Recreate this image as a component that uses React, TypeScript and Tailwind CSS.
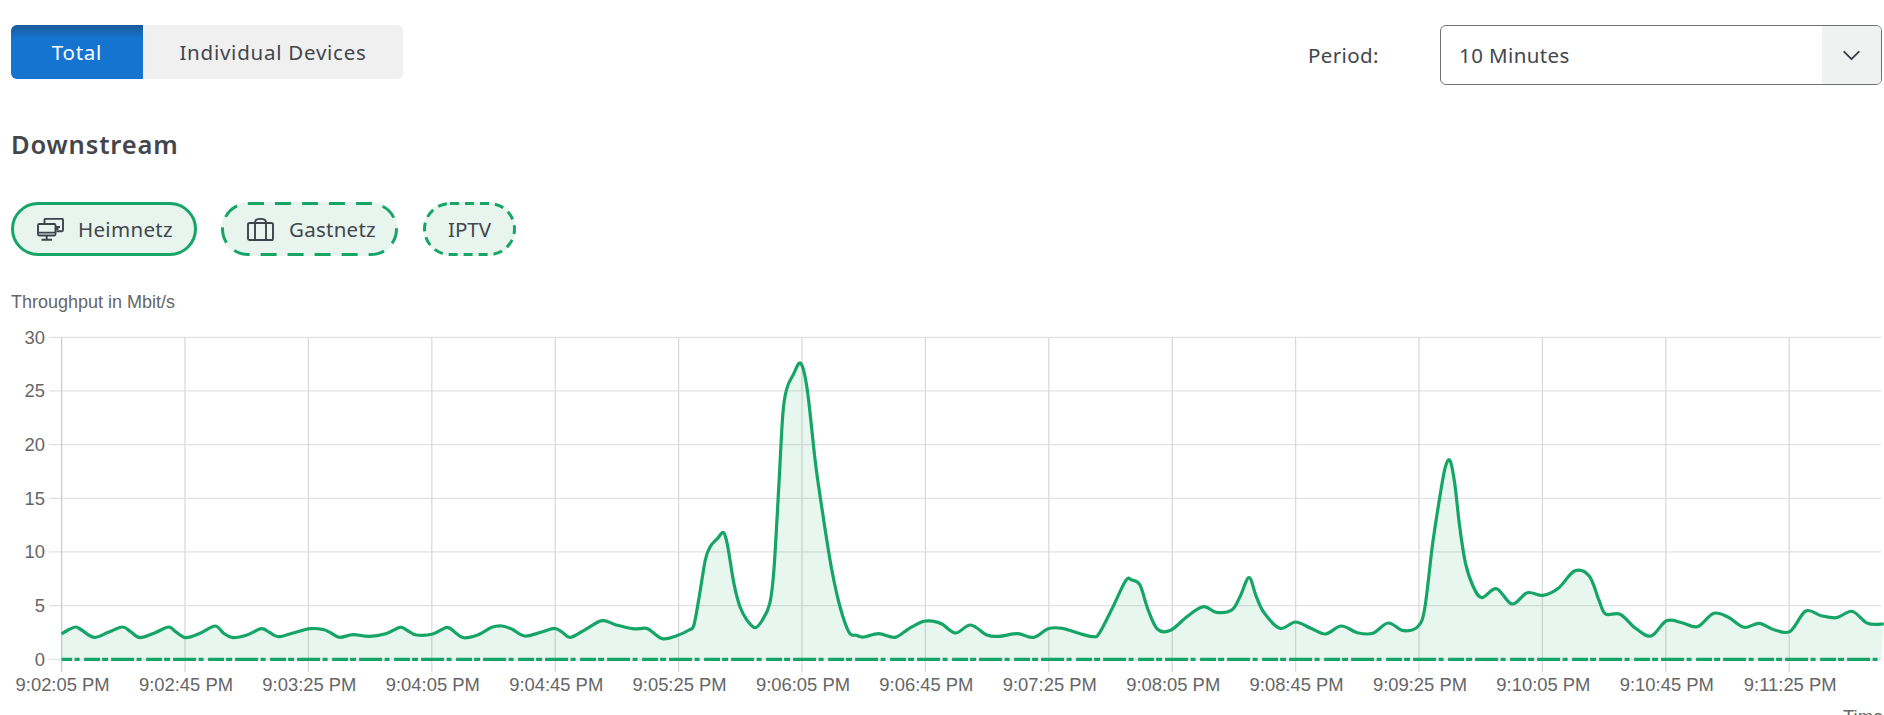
import { ChevronDown } from 'lucide-react';

const zoomA = [[151,942],[170,928],[186,921],[200,930],[230,952],[265,937],[300,921],[320,935],[343,953],[380,938],[413,921],[430,935],[455,953],[490,940],[527,918],[548,940],[570,953],[605,945],[640,926],[660,937],[682,950],[720,938],[760,926],[790,928],[810,938],[832,952],[865,944],[905,949],[945,941],[980,922],[1000,933],[1020,945],[1060,942],[1095,922],[1115,937],[1135,953],[1170,945],[1205,922],[1230,918],[1255,928],[1285,948],[1325,937],[1358,925],[1378,937],[1398,952],[1435,928],[1475,902],[1510,915],[1550,926]];
const zoomB = [[0,926],[20,927],[55,956],[90,947],[120,930],[132,915],[145,830],[160,720],[172,680],[190,655],[205,638],[215,680],[230,790],[245,860],[262,900],[282,923],[300,900],[318,850],[328,750],[340,500],[350,280],[360,205],[375,165],[394,130],[410,210],[430,430],[450,600],[470,750],[490,860],[512,937],[530,946],[548,951],[585,941],[625,952],[660,925],[695,904],[720,904],[740,912],[773,939],[810,915],[850,945],[880,949],[925,941],[965,952],[1000,926],[1035,925],[1075,940],[1110,950],[1125,940],[1155,870],[1190,782],[1205,780],[1225,795],[1245,870],[1268,928],[1300,931],[1340,890],[1380,860],[1412,877],[1450,870],[1470,830],[1492,773],[1510,830],[1530,880]];
const zoomC = [[0,925],[40,906],[80,925],[118,942],[158,918],[200,938],[240,940],[280,909],[320,932],[358,918],[375,860],[395,670],[415,520],[428,440],[440,422],[452,490],[465,620],[480,730],[500,800],[522,833],[560,806],[600,852],[640,818],[680,826],[720,805],[762,753],[800,768],[825,840],[842,882],[880,883],[920,925],[960,948],[1000,902],[1040,908],[1080,920],[1122,880],[1160,892],[1200,922],[1240,910],[1280,930],[1320,934],[1360,873],[1400,887],[1440,893],[1480,874],[1520,910],[1562,912]];

const pts: number[][] = [
  ...zoomA.map(([x, y]) => [x / 2.45, 320 + y / 3]),
  ...zoomB.map(([x, y]) => [640 + x / 2.45, 320 + y / 3]),
  ...zoomC.map(([x, y]) => [1280 + x / 2.587, 320 + y / 3]),
];

function smooth(p: number[][]) {
  let d = `M${p[0][0].toFixed(1)} ${p[0][1].toFixed(1)}`;
  for (let i = 0; i < p.length - 1; i++) {
    const a = p[Math.max(i - 1, 0)];
    const b = p[i];
    const c = p[i + 1];
    const e = p[Math.min(i + 2, p.length - 1)];
    const c1x = b[0] + (c[0] - a[0]) / 6;
    const c1y = b[1] + (c[1] - a[1]) / 6;
    const c2x = c[0] - (e[0] - b[0]) / 6;
    const c2y = c[1] - (e[1] - b[1]) / 6;
    d += `C${c1x.toFixed(1)} ${c1y.toFixed(1)} ${c2x.toFixed(1)} ${c2y.toFixed(1)} ${c[0].toFixed(1)} ${c[1].toFixed(1)}`;
  }
  return d;
}

const line = smooth(pts);
const left = 61.6;
const right = 1881;
const top = 337.3;
const zero = 659.3;
const yTicks = [30, 25, 20, 15, 10, 5, 0];
const xTicks = ['9:02:05 PM', '9:02:45 PM', '9:03:25 PM', '9:04:05 PM', '9:04:45 PM', '9:05:25 PM', '9:06:05 PM', '9:06:45 PM', '9:07:25 PM', '9:08:05 PM', '9:08:45 PM', '9:09:25 PM', '9:10:05 PM', '9:10:45 PM', '9:11:25 PM'];

function Chart() {
  return (
    <svg viewBox="0 315 1884 400" className="block mt-[3px] w-[1884px] h-[400px]" fontFamily="'Liberation Sans', Arial, sans-serif">
      {yTicks.map((v) => {
        const y = zero - (v / 30) * (zero - top);
        return (
          <g key={v}>
            <line x1={49} x2={right} y1={y} y2={y} stroke="#e2e2e2" strokeWidth={1.3} />
            <text x={45} y={y + 6.5} textAnchor="end" fontSize={18.4} fill="#666666">{v}</text>
          </g>
        );
      })}
      {xTicks.map((t, i) => {
        const x = left + i * 123.4;
        return (
          <g key={t}>
            <line x1={x} x2={x} y1={top} y2={672} stroke={i === 0 ? '#cccccc' : '#dadada'} strokeWidth={1.3} />
            <text x={x + 1} y={691} textAnchor="middle" fontSize={18.4} fill="#666666">{t}</text>
          </g>
        );
      })}
      <path d={`${line}L${right} ${zero}L${left} ${zero}Z`} fill="#16a566" fillOpacity={0.1} />
      <path d={line} fill="none" stroke="#16a566" strokeWidth={3.2} strokeLinejoin="round" />
      <line x1={left} x2={right} y1={zero} y2={zero} stroke="#16a566" strokeWidth={3.2} strokeDasharray="5 4.5 16 2 6 3 23 2.5" strokeDashoffset={49} />
      <text x={1843} y={722.5} fontSize={18.4} fill="#666666">Time</text>
    </svg>
  );
}

function MonitorsIcon() {
  return (
    <svg viewBox="0 0 27 23" className="w-[27px] h-[23px] shrink-0" fill="none" stroke="#3f434a" strokeWidth={1.9}>
      <path d="M7.5 6V2a1.2 1.2 0 0 1 1.2-1.2h16.1A1.2 1.2 0 0 1 26 2v10a1.2 1.2 0 0 1-1.2 1.2h-5.3" />
      <rect x="1" y="6" width="17.5" height="11.5" rx="1.2" />
      <path d="M9.7 17.5v3.6M4.5 21.8h10.5M1 14.6h17.5M18.5 9h4.5M18.5 11h3" />
    </svg>
  );
}

function BriefcaseIcon() {
  return (
    <svg viewBox="0 0 27 23" className="w-[27px] h-[23px] shrink-0" fill="none" stroke="#3f434a" strokeWidth={1.9}>
      <rect x="1" y="5" width="25" height="17" rx="1.6" />
      <path d="M8 22V4.5C8 2 10 .9 13.5.9S19 2 19 4.5V22" />
    </svg>
  );
}

function DashedOutline({ dash }: { dash: string }) {
  return (
    <svg className="absolute inset-0 w-full h-full" fill="none">
      <rect x="1.5" y="1.5" width="calc(100% - 3px)" height="51" rx="25.5" stroke="#16a566" strokeWidth={3} strokeDasharray={dash} />
    </svg>
  );
}

export default function App() {
  return (
    <div className="w-[1884px] h-[715px] overflow-hidden bg-white text-[#43464b]" style={{ fontFamily: "'Noto Sans', sans-serif" }}>
      <div className="flex items-start justify-between pl-[11px] pr-[2px] pt-[25px]">
        <div className="flex h-[54px] w-[392px] rounded-[6px] overflow-hidden bg-[#f0f0f0] text-[20.5px]">
          <div className="flex w-[132px] items-center justify-center bg-gradient-to-b from-[#1c5a96] from-0% to-[#1474d0] to-25% tracking-[0.75px] text-white">Total</div>
          <div className="flex flex-1 items-center justify-center tracking-[0.75px]">Individual Devices</div>
        </div>
        <div className="flex items-center">
          <span className="text-[20.5px] tracking-[0.4px] mr-[61px]">Period:</span>
          <div className="flex h-[60px] w-[442px] rounded-[6px] border border-[#6f7275] overflow-hidden">
            <div className="flex flex-1 items-center pl-[18px] text-[20.5px] tracking-[0.4px]">10 Minutes</div>
            <div className="flex w-[59px] items-center justify-center bg-[#f0f1f1]">
              <ChevronDown size={29} strokeWidth={1.6} color="#3a3f45" />
            </div>
          </div>
        </div>
      </div>

      <h2 className="pl-[11px] mt-[41px] text-[25.5px] font-semibold leading-[36px] tracking-[0.85px]">Downstream</h2>

      <div className="flex pl-[11px] mt-[40px] text-[20.5px]">
        <div className="flex h-[54px] w-[186px] items-center gap-[14px] pl-[23px] rounded-full border-[3px] border-[#16a566] bg-[#e7f5ee] tracking-[0.3px]">
          <MonitorsIcon />
          <span>Heimnetz</span>
        </div>
        <div className="relative flex h-[54px] w-[177px] ml-[24px] items-center gap-[15px] pl-[26px] rounded-full bg-[#e7f5ee] tracking-[0.25px]">
          <DashedOutline dash="16 11" />
          <BriefcaseIcon />
          <span>Gastnetz</span>
        </div>
        <div className="relative flex h-[54px] w-[93px] ml-[25px] items-center justify-center rounded-full bg-[#e7f5ee]">
          <DashedOutline dash="9 6" />
          <span>IPTV</span>
        </div>
      </div>

      <div className="pl-[11px] mt-[36px] text-[18px] leading-[20px] text-[#666666]" style={{ fontFamily: "'Liberation Sans', Arial, sans-serif" }}>
        Throughput in Mbit/s
      </div>
      <Chart />
    </div>
  );
}
